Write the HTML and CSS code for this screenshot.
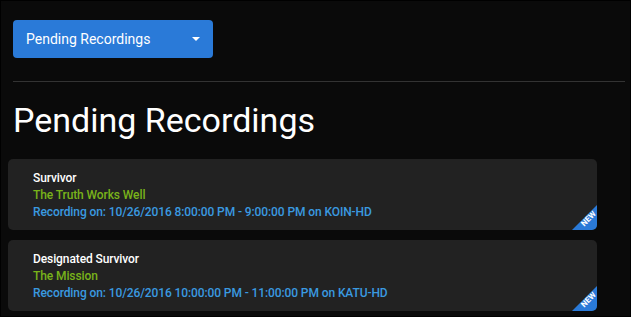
FILE: index.html
```html
<!DOCTYPE html>
<html lang="en">
<head>
  <meta charset="UTF-8" />
  <meta name="viewport" content="width=device-width, initial-scale=1.0"/>
  <title>Pending Recordings</title>
  <link rel="stylesheet" href="styles.css">
</head>
<body>
  <div class="page">
    <button class="view-select">
      <span>Pending Recordings</span>
      <span class="caret"></span>
    </button>

    <hr class="divider">

    <h1>Pending Recordings</h1>

    <div class="recordings">
      <div class="recording">
        <div class="show">Survivor</div>
        <div class="episode">The Truth Works Well</div>
        <div class="when">Recording on: 10/26/2016 8:00:00 PM - 9:00:00 PM on KOIN-HD</div>
        <div class="new-badge"><span>NEW</span></div>
      </div>
      <div class="recording">
        <div class="show">Designated Survivor</div>
        <div class="episode">The Mission</div>
        <div class="when">Recording on: 10/26/2016 10:00:00 PM - 11:00:00 PM on KATU-HD</div>
        <div class="new-badge"><span>NEW</span></div>
      </div>
    </div>
  </div>
</body>
</html>
```

FILE: styles.css
```css
html {
  background-color: #000;
}

body {
  margin: 1px;
  height: 315px;
  overflow: hidden;
  background-color: #0a0a0a;
  color: #fff;
  font-family: Roboto, 'Liberation Sans', sans-serif;
}

.page {
  padding: 19px 5px 0 12px;
}

.view-select {
  display: flex;
  align-items: center;
  justify-content: space-between;
  width: 200px;
  height: 38px;
  padding: 0 13px;
  border: none;
  border-radius: 4px;
  background-color: #2a7ad8;
  color: #fff;
  font-family: inherit;
  font-size: 14px;
  cursor: pointer;
}

.caret {
  width: 0;
  height: 0;
  border-left: 4px solid transparent;
  border-right: 4px solid transparent;
  border-top: 4px solid #fff;
}

.divider {
  margin: 23px 0 0 0;
  border: none;
  border-top: 1px solid #333;
}

h1 {
  margin: 18px 0 18px 0;
  font-size: 34px;
  font-weight: 400;
  line-height: 41px;
}

.recordings {
  display: flex;
  flex-direction: column;
  gap: 10px;
  margin-left: -5px;
  width: 589px;
}

.recording {
  position: relative;
  overflow: hidden;
  padding: 11px 25px 9px 25px;
  border-radius: 5px;
  background-color: #222;
  font-size: 12px;
  font-weight: 500;
  line-height: 17px;
  letter-spacing: -0.1px;
}

.show {
  color: #fff;
}

.episode {
  color: #79b31a;
}

.when {
  color: #3a9ae0;
}

.new-badge {
  position: absolute;
  right: 0;
  bottom: 0;
  width: 25px;
  height: 25px;
}

.new-badge::before {
  content: "";
  position: absolute;
  inset: 0;
  background-color: #2a7ad8;
  clip-path: polygon(100% 0, 100% 100%, 0 100%);
}

.new-badge span {
  position: absolute;
  left: 5px;
  top: 10px;
  width: 24px;
  transform: rotate(-45deg);
  font-size: 8px;
  font-weight: 700;
  line-height: 8px;
  letter-spacing: 0.2px;
  text-align: center;
  color: #fff;
}
```
